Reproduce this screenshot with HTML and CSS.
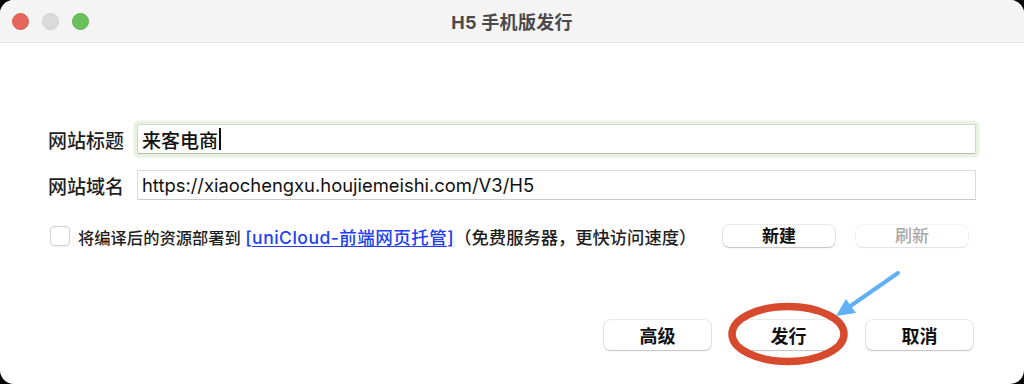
FILE: index.html
```html
<!DOCTYPE html>
<html lang="zh-CN">
<head>
<meta charset="utf-8">
<title>H5 手机版发行</title>
<link rel="stylesheet" href="styles.css">
</head>
<body>
<div class="window">
  <div class="titlebar">
    <div class="lights">
      <span class="light red"></span>
      <span class="light gray"></span>
      <span class="light green"></span>
    </div>
    <div class="title">H5 手机版发行</div>
    <div class="spacer"></div>
  </div>
  <div class="content">
    <div class="form">
      <label class="label">网站标题</label>
      <div class="input focused"><span class="value">来客电商</span><span class="caret"></span></div>
      <label class="label">网站域名</label>
      <div class="input"><span class="value latin">https://xiaochengxu.houjiemeishi.com/V3/H5</span></div>
    </div>
    <div class="deploy">
      <span class="checkbox"></span>
      <span class="deploy-text">将编译后的资源部署到 <a class="link">[uniCloud-前端网页托管]</a><span class="note">（免费服务器，更快访问速度）</span></span>
      <div class="deploy-buttons">
        <button class="btn small">新建</button>
        <button class="btn small disabled">刷新</button>
      </div>
    </div>
    <div class="actions">
      <button class="btn big">高级</button>
      <button class="btn big">发行</button>
      <button class="btn big">取消</button>
    </div>
  </div>
  <svg class="annotation" width="1024" height="384" viewBox="0 0 1024 384">
    <ellipse cx="788" cy="334" rx="56" ry="27.5" fill="none" stroke="#d74a2d" stroke-width="7.5"/>
    <line x1="898" y1="273" x2="849" y2="307" stroke="#62b0f4" stroke-width="4" stroke-linecap="round"/>
    <polygon points="836,316 846,299 856,313" fill="#62b0f4"/>
  </svg>
</div>
</body>
</html>
```
FILE: styles.css
```css
* { box-sizing: border-box; }
html, body { margin: 0; padding: 0; background: #000; }
body {
  width: 1024px;
  height: 384px;
  overflow: hidden;
  font-family: "Inter", "Noto Sans CJK SC", sans-serif;
}
.window {
  position: relative;
  width: 1024px;
  height: 384px;
  background: #fff;
  border-radius: 14px;
  overflow: hidden;
}
.titlebar {
  height: 43px;
  background: #f4f4f4;
  border-bottom: 1px solid #e2e2e2;
  display: grid;
  grid-template-columns: 1fr auto 1fr;
  align-items: center;
}
.lights {
  display: flex;
  gap: 13px;
  padding-left: 12px;
}
.light {
  width: 17px;
  height: 17px;
  border-radius: 50%;
}
.light.red { background: #e5665b; border: 1px solid #d75c51; }
.light.gray { background: #dadada; border: 1px solid #cfcfcf; }
.light.green { background: #6cc05b; border: 1px solid #5fb24f; }
.title {
  font-size: 18px;
  font-weight: 700;
  color: #4a4a4a;
  letter-spacing: 0.3px;
}
.content {
  padding: 81px 48px 0 48px;
}
.form {
  display: grid;
  grid-template-columns: 89px 1fr;
  row-gap: 16px;
  align-items: center;
}
.label {
  font-size: 19px;
  font-weight: 500;
  color: #1e1e1e;
}
.input {
  height: 30px;
  border: 1px solid #dcdcdc;
  border-bottom-color: #c9c9c9;
  background: #fff;
  display: flex;
  align-items: center;
  padding-left: 4px;
  font-size: 19px;
  font-weight: 500;
  color: #111;
}
.input.focused {
  border-color: #d0d8c8;
  border-bottom-color: #b4bcac;
  box-shadow: 0 0 0 3.5px #e9f1e1;
  border-radius: 2px;
}
.value.latin { font-size: 18.4px; font-weight: 400; }
.caret {
  display: inline-block;
  width: 1.5px;
  height: 22px;
  background: #111;
  margin-left: 1px;
}
.deploy {
  display: flex;
  align-items: center;
  margin-top: 25px;
  padding-left: 2px;
  padding-right: 8px;
  height: 22px;
}
.checkbox {
  width: 20px;
  height: 20px;
  border: 1px solid #d4d4d4;
  border-radius: 5px;
  background: #fff;
  box-shadow: 0 0.5px 1px rgba(0,0,0,0.08);
  flex: none;
}
.deploy-text {
  margin-left: 8px;
  font-size: 16.3px;
  font-weight: 500;
  color: #1e1e1e;
  white-space: nowrap;
}
.link {
  color: #2140f2;
  font-size: 17.5px;
  letter-spacing: 0.5px;
  text-decoration: underline;
  text-underline-offset: 2px;
}
.note {
  font-size: 17.3px;
}
.deploy-buttons {
  margin-left: auto;
  display: flex;
  gap: 21px;
}
.btn {
  font-family: "Inter", "Noto Sans CJK SC", sans-serif;
  background: #fff;
  border: none;
  border-radius: 6px;
  box-shadow: 0 0 0 0.5px rgba(0,0,0,0.16), 0 1px 1.5px rgba(0,0,0,0.18);
  color: #111;
  font-weight: 700;
  padding: 0;
}
.btn.small {
  width: 112px;
  height: 22px;
  font-size: 17px;
  line-height: 22px;
}
.btn.disabled {
  color: #a8a8a8;
  font-weight: 500;
  box-shadow: 0 0 0 0.5px rgba(0,0,0,0.08), 0 1px 1px rgba(0,0,0,0.08);
}
.actions {
  display: flex;
  justify-content: flex-end;
  gap: 24px;
  margin-top: 73px;
  padding-right: 3px;
}
.btn.big {
  width: 107px;
  height: 30px;
  font-size: 18px;
}
.annotation {
  position: absolute;
  left: 0;
  top: 0;
  pointer-events: none;
}
```
